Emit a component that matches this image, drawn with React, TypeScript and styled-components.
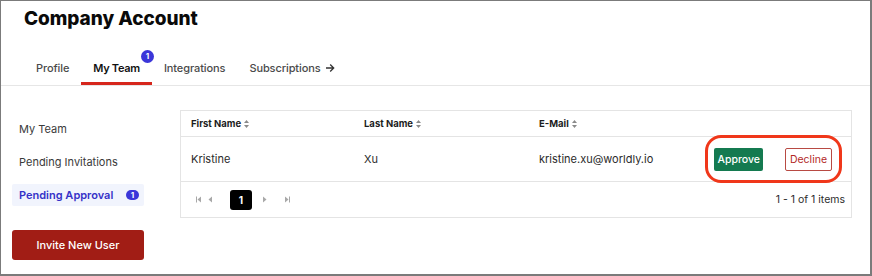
import React from 'react';
import styled, { createGlobalStyle } from 'styled-components';

const GlobalStyle = createGlobalStyle`
	html, body {
		margin: 0;
		padding: 0;
		background: #ffffff;
	}
	body {
		font-family: Inter, "Liberation Sans", Arial, sans-serif;
		color: #222;
	}
	* {
		box-sizing: border-box;
	}
`;

const members = [{ first: 'Kristine', last: 'Xu', email: 'kristine.xu@worldly.io' }];

const tabs = [
	{ label: 'Profile' },
	{ label: 'My Team', active: true, badge: 1 },
	{ label: 'Integrations' },
	{ label: 'Subscriptions', arrow: true }
];

const sideItems = [
	{ label: 'My Team' },
	{ label: 'Pending Invitations' },
	{ label: 'Pending Approval', active: true, badge: 1 }
];

function SortIcon() {
	return (
		<svg width="5" height="8" viewBox="0 0 5 8">
			<path d="M2.5 0 L5 3 H0 Z" fill="#8a8a8a" />
			<path d="M2.5 8 L5 5 H0 Z" fill="#8a8a8a" />
		</svg>
	);
}

function PagerIcon({ kind }: { kind: 'first' | 'prev' | 'next' | 'last' }) {
	const left = kind === 'first' || kind === 'prev';
	const bar = kind === 'first' || kind === 'last';
	return (
		<svg width="6" height="7" viewBox="0 0 6 7">
			{left ? <path d="M5 0.5 V6.5 L1.5 3.5 Z" fill="#a8a8a8" /> : <path d="M1 0.5 V6.5 L4.5 3.5 Z" fill="#a8a8a8" />}
			{bar && (left ? <rect x="0" y="0.5" width="1" height="6" fill="#a8a8a8" /> : <rect x="5" y="0.5" width="1" height="6" fill="#a8a8a8" />)}
		</svg>
	);
}

export default function App() {
	return (
		<>
			<GlobalStyle />
			<StyledPage>
				<Header>
					<Title>Company Account</Title>
					<TabBar>
						{tabs.map(tab => (
							<Tab key={tab.label} $active={!!tab.active}>
								<TabLabel>
									{tab.label}
									{tab.arrow && (
										<svg width="10" height="10" viewBox="0 0 10 10" style={{ marginLeft: 4 }}>
											<path d="M1 5 H8.5 M5.2 1.5 L8.7 5 L5.2 8.5" stroke="#333" strokeWidth="1.3" fill="none" />
										</svg>
									)}
									{tab.badge && <TabBadge>{tab.badge}</TabBadge>}
								</TabLabel>
							</Tab>
						))}
					</TabBar>
				</Header>

				<Body>
					<Sidebar>
						<SideNav>
							{sideItems.map(item => (
								<SideItem key={item.label} $active={!!item.active}>
									{item.label}
									{item.badge && <CountBadge>{item.badge}</CountBadge>}
								</SideItem>
							))}
						</SideNav>
						<InviteButton>Invite New User</InviteButton>
					</Sidebar>

					<Main>
						<Card>
							<HeadRow>
								<HeadCell>
									First Name <SortIcon />
								</HeadCell>
								<HeadCell>
									Last Name <SortIcon />
								</HeadCell>
								<HeadCell>
									E-Mail <SortIcon />
								</HeadCell>
								<HeadCell />
							</HeadRow>

							{members.map(m => (
								<DataRow key={m.email}>
									<Cell>{m.first}</Cell>
									<Cell>{m.last}</Cell>
									<Cell>{m.email}</Cell>
									<ActionCell>
										<Highlight>
											<ApproveButton>Approve</ApproveButton>
											<DeclineButton>Decline</DeclineButton>
										</Highlight>
									</ActionCell>
								</DataRow>
							))}

							<Footer>
								<Pager>
									<PagerArrow>
										<PagerIcon kind="first" />
									</PagerArrow>
									<PagerArrow>
										<PagerIcon kind="prev" />
									</PagerArrow>
									<PageNumber>1</PageNumber>
									<PagerArrow>
										<PagerIcon kind="next" />
									</PagerArrow>
									<PagerArrow>
										<PagerIcon kind="last" />
									</PagerArrow>
								</Pager>
								<PagerInfo>1 - 1 of 1 items</PagerInfo>
							</Footer>
						</Card>
					</Main>
				</Body>
			</StyledPage>
		</>
	);
}

const StyledPage = styled.div`
	width: 872px;
	height: 276px;
	border: 1px solid #7b7b7b;
	border-right-width: 2px;
	border-bottom-width: 2px;
	overflow: hidden;
	background: #fff;
`;

const Header = styled.div`
	border-bottom: 1px solid #e6e6e6;
`;

const Title = styled.h1`
	margin: 0;
	padding: 6px 0 0 23px;
	font-size: 19px;
	line-height: 24px;
	font-weight: 800;
	color: #0a0a0a;
	letter-spacing: -0.05px;
`;

const TabBar = styled.div`
	display: flex;
	padding: 0 0 0 23px;
	margin-top: 19px;
`;

const Tab = styled.div<{ $active: boolean }>`
	display: flex;
	align-items: center;
	height: 35px;
	padding: 3px 12px 0;
	border-bottom: 3px solid ${p => (p.$active ? '#d6261c' : 'transparent')};
	font-size: 11px;
	letter-spacing: ${p => (p.$active ? '-0.3px' : '-0.1px')};
	font-weight: ${p => (p.$active ? 600 : 500)};
	color: ${p => (p.$active ? '#111' : '#4a4a4a')};
`;

const TabLabel = styled.span`
	position: relative;
	display: inline-flex;
	align-items: center;
`;

const TabBadge = styled.span`
	position: absolute;
	top: -11px;
	right: -14px;
	width: 13px;
	height: 13px;
	border-radius: 50%;
	background: #3b36d9;
	color: #fff;
	font-size: 8px;
	font-weight: 700;
	letter-spacing: 0;
	display: flex;
	align-items: center;
	justify-content: center;
`;

const Body = styled.div`
	display: flex;
`;

const Sidebar = styled.div`
	width: 143px;
	padding: 32px 0 0 11px;
	display: flex;
	flex-direction: column;
	gap: 24px;
`;

const SideNav = styled.div`
	display: flex;
	flex-direction: column;
	gap: 11px;
`;

const SideItem = styled.div<{ $active: boolean }>`
	display: flex;
	align-items: center;
	justify-content: space-between;
	height: 22px;
	padding: 0 5px 0 7px;
	border-radius: 2px;
	font-size: 11px;
	font-weight: ${p => (p.$active ? 600 : 400)};
	color: ${p => (p.$active ? '#3532c8' : '#3a3a3a')};
	background: ${p => (p.$active ? '#f1f4fd' : 'transparent')};
`;

const CountBadge = styled.span`
	min-width: 13px;
	height: 10px;
	padding: 0 3px;
	border-radius: 6px;
	background: #3b36d9;
	color: #fff;
	font-size: 8px;
	font-weight: 700;
	display: flex;
	align-items: center;
	justify-content: center;
`;

const InviteButton = styled.button`
	height: 30px;
	border: none;
	border-radius: 3px;
	background: #a11d15;
	color: #fff;
	font-family: inherit;
	font-size: 11px;
	font-weight: 500;
	cursor: pointer;
`;

const Main = styled.div`
	flex: 1;
	padding: 24px 18px 0 36px;
`;

const Card = styled.div`
	border: 1px solid #e4e4e4;
`;

const HeadRow = styled.div`
	display: grid;
	grid-template-columns: 173px 175px 1fr auto;
	height: 26px;
	align-items: center;
	border-bottom: 1px solid #e4e4e4;
`;

const HeadCell = styled.div`
	display: flex;
	align-items: center;
	gap: 3px;
	padding-left: 10px;
	font-size: 9.5px;
	font-weight: 700;
	color: #1c1c1c;
`;

const DataRow = styled.div`
	display: grid;
	grid-template-columns: 173px 175px 1fr auto;
	height: 45px;
	align-items: center;
	border-bottom: 1px solid #e4e4e4;
`;

const Cell = styled.div`
	padding-left: 10px;
	font-size: 11px;
	color: #2b2b2b;
`;

const ActionCell = styled.div`
	padding-right: 19px;
`;

const Highlight = styled.div`
	position: relative;
	display: flex;
	gap: 22px;
	&::before {
		content: '';
		position: absolute;
		inset: -13px -10px -12px -9px;
		border: 3px solid #f0371a;
		border-radius: 16px;
		pointer-events: none;
	}
`;

const ApproveButton = styled.button`
	height: 23px;
	padding: 0 3px;
	border: none;
	border-radius: 2px;
	background: #147a50;
	color: #fff;
	font-family: inherit;
	font-size: 10.5px;
	font-weight: 500;
`;

const DeclineButton = styled.button`
	height: 23px;
	padding: 0 4px;
	border: 1px solid #b84a43;
	border-radius: 2px;
	background: #fff;
	color: #b3281f;
	font-family: inherit;
	font-size: 10.5px;
	font-weight: 400;
`;

const Footer = styled.div`
	display: flex;
	align-items: center;
	justify-content: space-between;
	height: 35px;
	padding: 0 6px 0 12px;
`;

const Pager = styled.div`
	display: flex;
	align-items: center;
`;

const PagerArrow = styled.span`
	width: 11px;
	height: 20px;
	margin-right: 0;
	display: flex;
	align-items: center;
	justify-content: center;
	&:nth-child(2) {
		margin-right: 15px;
	}
	&:nth-child(4) {
		margin: 0 11px 0 7px;
	}
`;

const PageNumber = styled.span`
	width: 22px;
	height: 20px;
	border-radius: 3px;
	background: #000;
	color: #fff;
	font-size: 10px;
	font-weight: 700;
	display: flex;
	align-items: center;
	justify-content: center;
`;

const PagerInfo = styled.span`
	font-size: 10.5px;
	color: #2b2b2b;
`;
